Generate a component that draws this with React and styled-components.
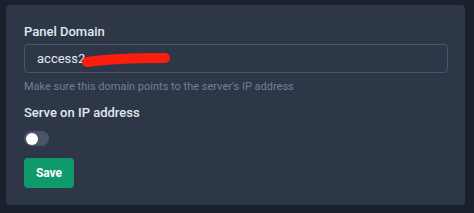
import React from "react";
import styled, { createGlobalStyle } from "styled-components";

const Global = createGlobalStyle`
  html, body { margin: 0; padding: 0; background: #1a202c; }
  body { font-family: Roboto, "Noto Sans", "Liberation Sans", sans-serif; }
`;

const Page = styled.div`
  width: 474px;
  height: 213px;
  box-sizing: border-box;
  padding: 5px 9px 0 6px;
  background: #1a202c;
`;

const Card = styled.div`
  box-sizing: border-box;
  width: 459px;
  height: 200px;
  background: #2d3748;
  border-radius: 4px;
  padding: 17px 17px 17px 18px;
  display: flex;
  flex-direction: column;
  align-items: flex-start;
`;

const Label = styled.div`
  font-size: 13px;
  line-height: 20px;
  font-weight: 500;
  color: #e2e8f0;
  margin-top: ${(p) => p.$mt || 0}px;
`;

const InputWrap = styled.div`
  position: relative;
  margin-top: 2px;
  width: 100%;
  height: 29px;
  box-sizing: border-box;
  border: 1px solid #4a5568;
  border-radius: 4px;
  display: flex;
  align-items: center;
  padding-left: 12px;
  font-size: 13px;
  color: #e2e8f0;
`;

const Redact = styled.svg`
  position: absolute;
  left: 56px;
  top: 6px;
`;

const Help = styled.div`
  margin-top: 6px;
  font-size: 11px;
  line-height: 16px;
  color: #718096;
`;

const Toggle = styled.div`
  margin-top: 8px;
  width: 25px;
  height: 15px;
  border-radius: 8px;
  background: #4a5568;
  display: flex;
  align-items: center;
  padding: 0 2px;
  box-sizing: border-box;
`;

const Knob = styled.div`
  width: 12px;
  height: 12px;
  border-radius: 50%;
  background: #ffffff;
`;

const Button = styled.button`
  margin-top: 12px;
  width: 50px;
  height: 30px;
  border: none;
  border-radius: 4px;
  background: #0e9a6b;
  color: #ffffff;
  font-family: inherit;
  font-size: 12px;
  font-weight: 700;
  padding: 0;
`;

export default function App() {
  return (
    <>
      <Global />
      <Page>
        <Card>
          <Label>Panel Domain</Label>
          <InputWrap>
            access2.
            <Redact width="90" height="18" viewBox="0 0 90 18">
              <path
                d="M6 11 C 20 9, 45 7, 84 7"
                stroke="#fb1e0c"
                strokeWidth="10"
                strokeLinecap="round"
                fill="none"
              />
            </Redact>
          </InputWrap>
          <Help>Make sure this domain points to the server's IP address</Help>
          <Label $mt={8}>Serve on IP address</Label>
          <Toggle>
            <Knob />
          </Toggle>
          <Button>Save</Button>
        </Card>
      </Page>
    </>
  );
}
